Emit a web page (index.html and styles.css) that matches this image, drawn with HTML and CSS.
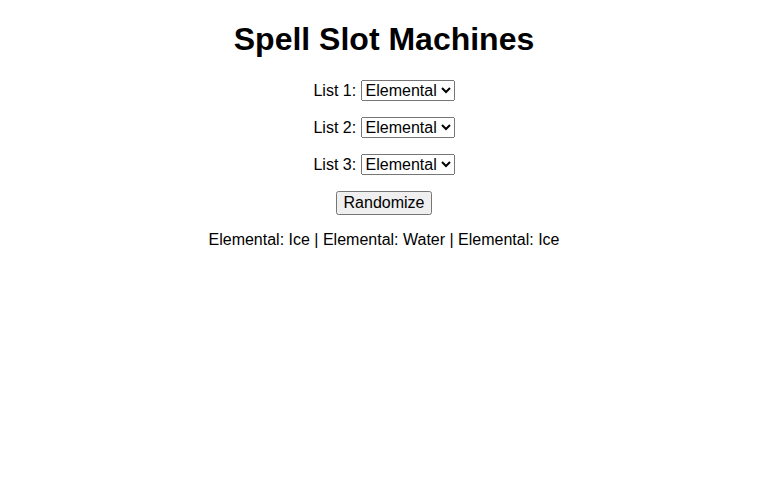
FILE: index.html
```html
<!DOCTYPE html>
<html lang="en">
<head>
  <meta charset="UTF-8">
  <title>Spell Slot Machines</title>
  <link rel="stylesheet" href="styles.css">
</head>
<body>
  <h1>Spell Slot Machines</h1>
  <p>
    <label for="list1">List 1:</label>
    <select id="list1">
      <option>Elemental</option>
    </select>
  </p>
  <p>
    <label for="list2">List 2:</label>
    <select id="list2">
      <option>Elemental</option>
    </select>
  </p>
  <p>
    <label for="list3">List 3:</label>
    <select id="list3">
      <option>Elemental</option>
    </select>
  </p>
  <p><button id="randomize">Randomize</button></p>
  <p id="result">Elemental: Ice | Elemental: Water | Elemental: Ice</p>
</body>
</html>
```

FILE: styles.css
```css
body {
  font-family: "Liberation Sans", Arial, sans-serif;
  margin: 0;
  text-align: center;
}
h1 {
  font-size: 2em;
}
select,
button {
  font-family: "Liberation Sans", Arial, sans-serif;
  font-size: 16px;
}
```
